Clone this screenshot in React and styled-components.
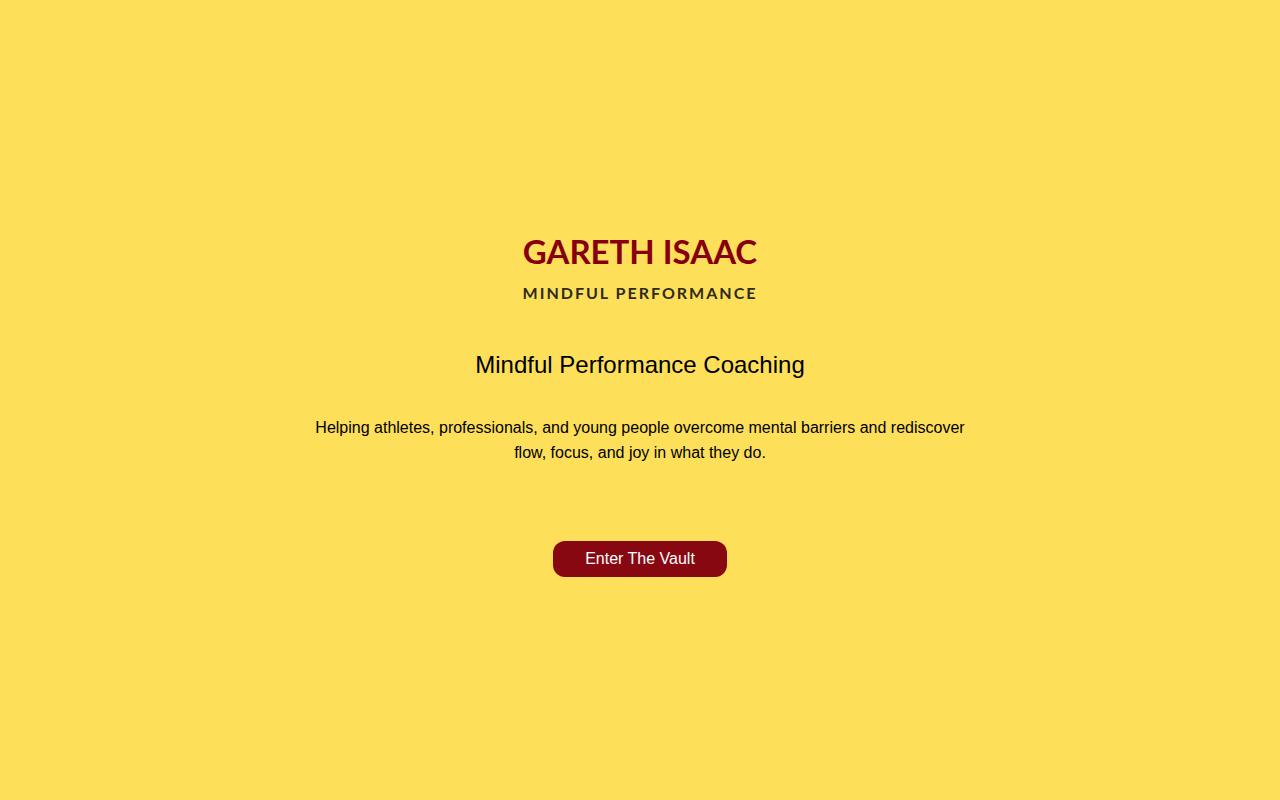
import React from 'react'
import styled, { createGlobalStyle } from 'styled-components'

const App = () => {
  return (
    <>
      <GlobalStyle />
      <Landing>
        <Logo>
          <LogoName>GARETH ISAAC</LogoName>
          <LogoTagline>MINDFUL PERFORMANCE</LogoTagline>
        </Logo>
        <Title>Mindful Performance Coaching</Title>
        <Intro>
          Helping athletes, professionals, and young people overcome mental
          barriers and rediscover flow, focus, and joy in what they do.
        </Intro>
        <EnterButton type="button">Enter The Vault</EnterButton>
      </Landing>
    </>
  )
}

const GlobalStyle = createGlobalStyle`
  * {
    box-sizing: border-box;
  }

  body {
    margin: 0;
    background: #fedf5a;
    color: #000;
    font-family: Arial, 'Liberation Sans', sans-serif;
    text-rendering: optimizeSpeed;
  }
`

const Landing = styled.main`
  display: flex;
  flex-direction: column;
  align-items: center;
  justify-content: center;
  min-height: 100vh;
  padding: 16px;
  text-align: center;
`

const Logo = styled.div`
  display: flex;
  flex-direction: column;
  align-items: center;
  gap: 12px;
  padding: 8px 16px 12px;
  font-family: Lato, sans-serif;
  white-space: nowrap;
  text-rendering: optimizeLegibility;
`

const LogoName = styled.span`
  color: #860010;
  font-size: 33px;
  font-weight: 700;
  line-height: 40px;
`

const LogoTagline = styled.span`
  color: #2e2a20;
  font-size: 16px;
  font-weight: 700;
  line-height: 20px;
  letter-spacing: 2px;
`

const Title = styled.h1`
  margin: 32px 0;
  font-size: 24px;
  font-weight: 400;
  line-height: 36px;
`

const Intro = styled.p`
  max-width: 680px;
  margin: 0 0 76px;
  font-size: 16px;
  line-height: 25px;
`

const EnterButton = styled.button`
  padding: 8px 32px;
  border: none;
  border-radius: 12px;
  background: #880812;
  color: #fff;
  font-family: inherit;
  font-size: 16px;
  line-height: 20px;
  cursor: pointer;
`

export default App
